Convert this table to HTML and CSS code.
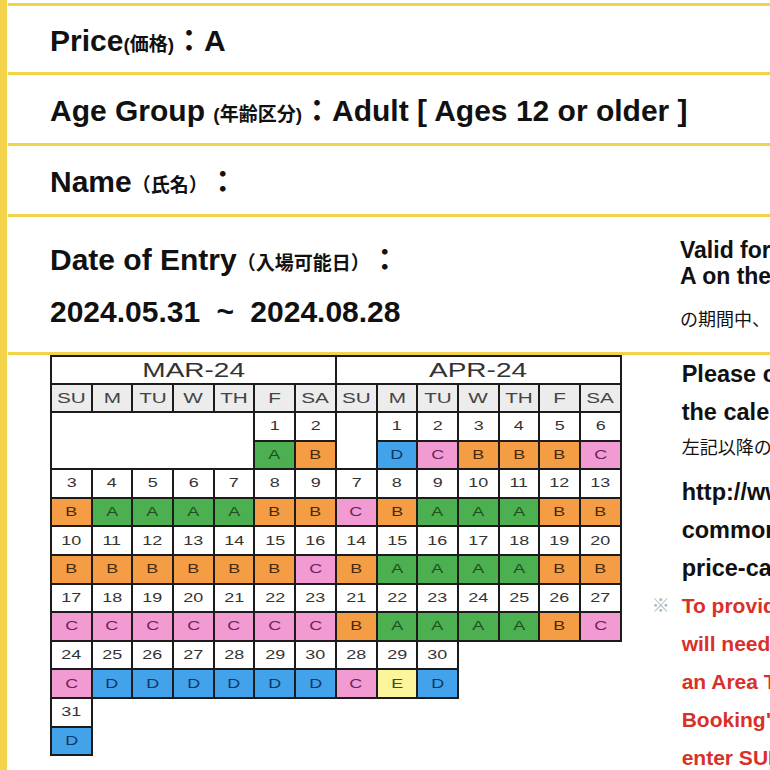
FILE: index.html
```html
<!DOCTYPE html>
<html lang="ja">
<head>
<meta charset="utf-8">
<title>Ticket</title>
<link rel="stylesheet" href="styles.css">
</head>
<body>
<div class="page">
  <div class="bar"></div>
  <main class="content">
    <section class="row row-price">
      <p class="field">Price<small>(価格)</small><span class="colon">：</span>A</p>
    </section>
    <section class="row row-age">
      <p class="field">Age Group <small>(年齢区分)</small><span class="colon">：</span>Adult [ Ages 12 or older ]</p>
    </section>
    <section class="row row-name">
      <p class="field">Name<small>（氏名）</small><span class="colon">：</span></p>
    </section>
    <section class="row row-entry">
      <div class="entry-left">
        <p class="field">Date of Entry<small>（入場可能日）</small><span class="colon">：</span></p>
        <p class="field dates">2024.05.31 ~ 2024.08.28</p>
      </div>
      <div class="entry-right">
        <p class="en">Valid for entry on the days marked with price</p>
        <p class="en">A on the calendar during the period.</p>
        <p class="jp">の期間中、カレンダーの価格Aの日に入場可能です。</p>
      </div>
    </section>
    <section class="row row-cal">
      <table class="cal">
        <colgroup><col span="14"></colgroup>
        <tr class="t"><th colspan="7"><span>MAR-24</span></th><th colspan="7"><span>APR-24</span></th></tr>
        <tr class="h">
          <td><span>SU</span></td><td><span>M</span></td><td><span>TU</span></td><td><span>W</span></td><td><span>TH</span></td><td><span>F</span></td><td><span>SA</span></td>
          <td><span>SU</span></td><td><span>M</span></td><td><span>TU</span></td><td><span>W</span></td><td><span>TH</span></td><td><span>F</span></td><td><span>SA</span></td>
        </tr>
        <tr class="n">
          <td class="blank edge" colspan="5" rowspan="2"></td><td><span>1</span></td><td><span>2</span></td>
          <td class="blank" rowspan="2"></td><td><span>1</span></td><td><span>2</span></td><td><span>3</span></td><td><span>4</span></td><td><span>5</span></td><td><span>6</span></td>
        </tr>
        <tr class="l">
          <td class="a"><span>A</span></td><td class="b"><span>B</span></td>
          <td class="d"><span>D</span></td><td class="c"><span>C</span></td><td class="b"><span>B</span></td><td class="b"><span>B</span></td><td class="b"><span>B</span></td><td class="c"><span>C</span></td>
        </tr>
        <tr class="n">
          <td><span>3</span></td><td><span>4</span></td><td><span>5</span></td><td><span>6</span></td><td><span>7</span></td><td><span>8</span></td><td><span>9</span></td>
          <td><span>7</span></td><td><span>8</span></td><td><span>9</span></td><td><span>10</span></td><td><span>11</span></td><td><span>12</span></td><td><span>13</span></td>
        </tr>
        <tr class="l">
          <td class="b"><span>B</span></td><td class="a"><span>A</span></td><td class="a"><span>A</span></td><td class="a"><span>A</span></td><td class="a"><span>A</span></td><td class="b"><span>B</span></td><td class="b"><span>B</span></td>
          <td class="c"><span>C</span></td><td class="b"><span>B</span></td><td class="a"><span>A</span></td><td class="a"><span>A</span></td><td class="a"><span>A</span></td><td class="b"><span>B</span></td><td class="b"><span>B</span></td>
        </tr>
        <tr class="n">
          <td><span>10</span></td><td><span>11</span></td><td><span>12</span></td><td><span>13</span></td><td><span>14</span></td><td><span>15</span></td><td><span>16</span></td>
          <td><span>14</span></td><td><span>15</span></td><td><span>16</span></td><td><span>17</span></td><td><span>18</span></td><td><span>19</span></td><td><span>20</span></td>
        </tr>
        <tr class="l">
          <td class="b"><span>B</span></td><td class="b"><span>B</span></td><td class="b"><span>B</span></td><td class="b"><span>B</span></td><td class="b"><span>B</span></td><td class="b"><span>B</span></td><td class="c"><span>C</span></td>
          <td class="b"><span>B</span></td><td class="a"><span>A</span></td><td class="a"><span>A</span></td><td class="a"><span>A</span></td><td class="a"><span>A</span></td><td class="b"><span>B</span></td><td class="b"><span>B</span></td>
        </tr>
        <tr class="n">
          <td><span>17</span></td><td><span>18</span></td><td><span>19</span></td><td><span>20</span></td><td><span>21</span></td><td><span>22</span></td><td><span>23</span></td>
          <td><span>21</span></td><td><span>22</span></td><td><span>23</span></td><td><span>24</span></td><td><span>25</span></td><td><span>26</span></td><td><span>27</span></td>
        </tr>
        <tr class="l">
          <td class="c"><span>C</span></td><td class="c"><span>C</span></td><td class="c"><span>C</span></td><td class="c"><span>C</span></td><td class="c"><span>C</span></td><td class="c"><span>C</span></td><td class="c"><span>C</span></td>
          <td class="b"><span>B</span></td><td class="a"><span>A</span></td><td class="a"><span>A</span></td><td class="a"><span>A</span></td><td class="a"><span>A</span></td><td class="b"><span>B</span></td><td class="c"><span>C</span></td>
        </tr>
        <tr class="n">
          <td><span>24</span></td><td><span>25</span></td><td><span>26</span></td><td><span>27</span></td><td><span>28</span></td><td><span>29</span></td><td><span>30</span></td>
          <td><span>28</span></td><td><span>29</span></td><td><span>30</span></td><td class="blank" colspan="4" rowspan="2"></td>
        </tr>
        <tr class="l">
          <td class="c"><span>C</span></td><td class="d"><span>D</span></td><td class="d"><span>D</span></td><td class="d"><span>D</span></td><td class="d"><span>D</span></td><td class="d"><span>D</span></td><td class="d"><span>D</span></td>
          <td class="c"><span>C</span></td><td class="e"><span>E</span></td><td class="d"><span>D</span></td>
        </tr>
        <tr class="n">
          <td><span>31</span></td><td class="blank" colspan="13" rowspan="2"></td>
        </tr>
        <tr class="l">
          <td class="d"><span>D</span></td>
        </tr>
      </table>
      <div class="info">
        <p class="en">Please check the price on</p>
        <p class="en">the calendar for later dates.</p>
        <p class="jp">左記以降の価格は下記をご確認ください。</p>
        <p class="en">http://www.usj.co.jp/web/en/us/</p>
        <p class="en">common/</p>
        <p class="en">price-calendar</p>
        <div class="note">
          <span class="mark">※</span>
          <div class="note-text">
            <p>To provide a smooth experience, you</p>
            <p>will need to obtain</p>
            <p>an Area Timed Entry Ticket or</p>
            <p>Booking" in order to</p>
            <p>enter SUPER NINTENDO WORLD.</p>
          </div>
        </div>
      </div>
    </section>
  </main>
</div>
</body>
</html>
```

FILE: styles.css
```css
html, body {
  margin: 0;
  padding: 0;
}

body {
  width: 770px;
  height: 770px;
  overflow: hidden;
  background: #ffffff;
  color: #111111;
  font-family: "Liberation Sans", Arial, "Noto Sans CJK JP", sans-serif;
  text-spacing-trim: space-all;
}

p {
  margin: 0;
}

.page {
  display: flex;
  height: 770px;
}

.bar {
  flex: none;
  width: 7px;
  background: #f3d34a;
}

.content {
  flex: 1;
  min-width: 0;
  margin-left: 1px;
  padding-top: 3px;
  overflow: hidden;
}

.row {
  border-top: 3px solid #f3d34a;
}

.row-price,
.row-age,
.row-name {
  display: flex;
  align-items: center;
  padding-left: 42px;
  padding-top: 8px;
  box-sizing: border-box;
}

.row-price {
  height: 69px;
}

.row-age,
.row-name {
  height: 71px;
}

.field {
  font-size: 30px;
  font-weight: bold;
  line-height: 34px;
  white-space: nowrap;
}

.field small {
  font-size: 19px;
}

.row-entry {
  display: grid;
  grid-template-columns: 630px auto;
  height: 135px;
  padding-left: 42px;
}

.entry-left {
  padding-top: 17px;
}

.entry-left .field {
  line-height: 52px;
}

.entry-left .dates {
  margin-top: -4px;
  word-spacing: 8px;
}

.entry-right {
  padding-top: 20px;
  white-space: nowrap;
}

.entry-right .en {
  font-size: 23px;
  font-weight: bold;
  line-height: 26px;
}

.entry-right .jp {
  margin-top: 18px;
  font-size: 18px;
  line-height: 26px;
}

.row-cal {
  display: flex;
  align-items: flex-start;
  padding-left: 42px;
}

/* calendar */
.cal {
  flex: none;
  width: 570px;
  border-collapse: collapse;
  table-layout: fixed;
  font-family: "Liberation Sans", Arial, sans-serif;
}

.cal col {
  width: 40.7px;
}

.cal td,
.cal th {
  padding: 0;
  border: 2px solid #1b1b1b;
  text-align: center;
  vertical-align: middle;
  font-weight: normal;
  white-space: nowrap;
  overflow: hidden;
  line-height: 16px;
}

.cal span {
  display: inline-block;
  transform: scaleX(1.38);
}

.cal .t {
  height: 28px;
}

.cal .t th {
  font-size: 20px;
  color: #333333;
  background: #ffffff;
}

.cal .t span {
  transform: scaleX(1.4);
}

.cal .h {
  height: 28px;
}

.cal .h td {
  background: #ececec;
  font-size: 15px;
  color: #444444;
}

.cal .n,
.cal .l {
  height: 28.6px;
}

.cal .n td {
  font-size: 13px;
  color: #333333;
  background: #ffffff;
}

.cal .l td {
  font-size: 13px;
}

.cal td.blank {
  border: none;
  background: #ffffff;
}

.cal td.edge {
  border-left: 2px solid #1b1b1b;
}

.cal td.a { background: #4caf50; color: #1d4f21; }
.cal td.b { background: #f59d45; color: #4a2a0c; }
.cal td.c { background: #f29ad2; color: #6b225f; }
.cal td.d { background: #42a3ea; color: #0d3663; }
.cal td.e { background: #fdf59b; color: #4d4a1a; }

/* info column */
.info {
  flex: none;
  margin-left: 30px;
  white-space: nowrap;
}

.info > p {
  padding-left: 30px;
}

.info .en {
  font-size: 23.5px;
  font-weight: bold;
  line-height: 38px;
}

.info .jp {
  font-size: 18px;
  line-height: 34px;
  margin-bottom: 8px;
}

.note {
  display: grid;
  grid-template-columns: 30px auto;
}

.mark {
  font-size: 18px;
  line-height: 38px;
  color: #b0b0b0;
}

.note-text p {
  font-size: 21px;
  font-weight: bold;
  line-height: 38px;
  color: #d8312a;
}
```
